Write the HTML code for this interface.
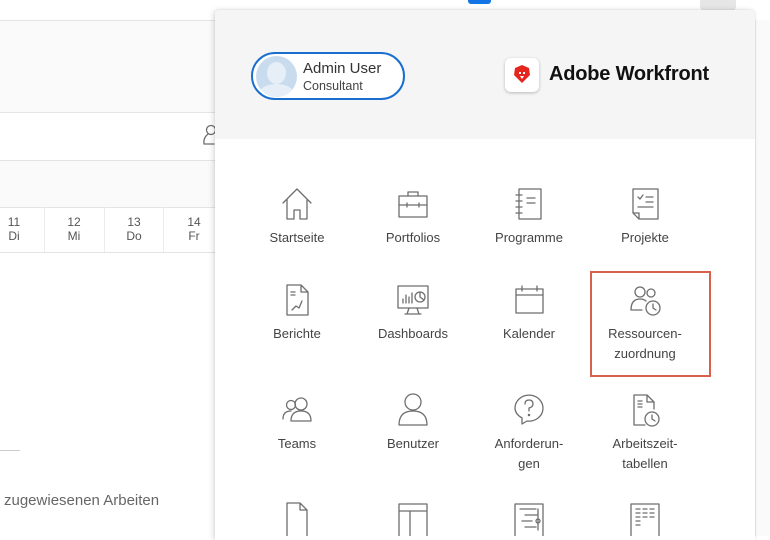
<!DOCTYPE html>
<html><head><meta charset="utf-8"><style>
*{margin:0;padding:0;box-sizing:border-box}
body{width:770px;height:536px;overflow:hidden;background:#fff;font-family:"Liberation Sans",sans-serif;position:relative;color:#4b4b4b}
.a{position:absolute}
.hl{position:absolute;left:0;height:1px;background:#e4e4e4}
.vl{position:absolute;width:1px;background:#ececec;top:207px;height:45px}
.d{position:absolute;top:215px;width:40px;text-align:center;font-size:12px;line-height:14px;color:#555}
.it{position:absolute;width:116px;text-align:center;font-size:13px;line-height:20px;color:#444}
.it svg{display:block;margin:0 auto 6px}
svg{fill:none;stroke:#6e6e6e;stroke-width:1.3;stroke-linecap:round;stroke-linejoin:round}
</style></head><body>
<div class="a" style="left:0;top:20px;width:770px;height:92px;background:#fafafa"></div>
<div class="hl" style="top:20px;width:770px"></div>
<div class="hl" style="top:112px;width:215px"></div>
<div class="a" style="left:0;top:160px;width:215px;height:47px;background:#fafafa"></div>
<div class="hl" style="top:160px;width:215px"></div>
<div class="hl" style="top:207px;width:215px"></div>
<div class="hl" style="top:252px;width:215px"></div>
<div class="vl" style="left:44px"></div><div class="vl" style="left:104px"></div><div class="vl" style="left:163px"></div>
<div class="d" style="left:-6px">11<br>Di</div>
<div class="d" style="left:54px">12<br>Mi</div>
<div class="d" style="left:114px">13<br>Do</div>
<div class="d" style="left:174px">14<br>Fr</div>
<svg class="a" style="left:202px;top:124px" width="14" height="22" viewBox="0 0 14 22"><circle cx="9" cy="6" r="4.5"/><path d="M6 10 Q1 14 2 20 L12 20"/></svg>
<div class="hl" style="top:450px;width:20px;background:#ccc"></div>
<div class="a" style="left:4px;top:492px;font-size:15px;color:#666">zugewiesenen Arbeiten</div>
<div class="a" style="left:468px;top:0;width:23px;height:4px;background:#1473e6;border-radius:0 0 3px 3px"></div>
<div class="a" style="left:700px;top:0;width:36px;height:12px;background:#e6e6e6;border-radius:0 0 6px 6px"></div>
<div class="a" style="left:755px;top:20px;width:15px;height:516px;background:#fafafa;border-left:1px solid #eee"></div>
<!-- panel -->
<div class="a" style="left:215px;top:10px;width:540px;height:530px;background:#fff;box-shadow:-2px 0 6px rgba(0,0,0,.12),0 0 2px rgba(0,0,0,.1);border-radius:4px 4px 0 0"></div>
<div class="a" style="left:215px;top:10px;width:540px;height:129px;background:#f5f5f5;border-radius:4px 4px 0 0"></div>
<div class="a" style="left:251px;top:52px;width:154px;height:48px;border:2.5px solid #1a6fce;border-radius:24px;background:#fff"></div>
<div class="a" style="left:256px;top:56px;width:41px;height:41px;border-radius:50%;background:#c9dced;overflow:hidden"><div class="a" style="left:11px;top:6px;width:19px;height:22px;border-radius:50%;background:#e6eff7"></div><div class="a" style="left:3px;top:28px;width:35px;height:20px;border-radius:50% 50% 0 0;background:#e6eff7"></div></div>
<div class="a" style="left:303px;top:60px;font-size:15px;color:#333">Admin User</div>
<div class="a" style="left:303px;top:79px;font-size:12.5px;color:#444">Consultant</div>
<div class="a" style="left:505px;top:58px;width:34px;height:34px;background:#fff;border-radius:6px;box-shadow:0 1px 3px rgba(0,0,0,.25)"></div>
<svg class="a" style="left:512px;top:64px;stroke:none" width="20" height="20" viewBox="0 0 20 20"><path fill="#e4261f" d="M10 1 L17 4 L18 11 L10 19 L2 11 L3 4Z"/><path fill="#fff" d="M7 8h2v2H7zM11 8h2v2h-2zM8 12h4l-2 3z"/></svg>
<div class="a" style="left:549px;top:63px;font-size:20px;font-weight:bold;color:#111;letter-spacing:-0.2px">Adobe Workfront</div>
<!-- grid -->
<div class="a" style="left:590px;top:271px;width:121px;height:106px;border:2px solid #d9604a"></div>
<div class="it" style="left:239px;top:186px"><svg width="34" height="36" viewBox="0 0 34 36"><path d="M3 17 L17 3 L31 17 M7 13 V33 H14 V24 H20 V33 H27 V13"/></svg>Startseite</div>
<div class="it" style="left:355px;top:186px"><svg width="34" height="36" viewBox="0 0 34 36"><rect x="3" y="10" width="28" height="21"/><path d="M12 10 V6 H22 V10 M3 19 H31 M11 17 V21 M23 17 V21"/></svg>Portfolios</div>
<div class="it" style="left:471px;top:186px"><svg width="34" height="36" viewBox="0 0 34 36"><rect x="7" y="3" width="22" height="30"/><path d="M4 9 H10 M4 15 H10 M4 21 H10 M4 27 H10 M15 12 H23 M15 17 H23"/></svg>Programme</div>
<div class="it" style="left:587px;top:186px"><svg width="34" height="36" viewBox="0 0 34 36"><path d="M5 3 H30 V33 H11 L5 27Z M5 27 H11 V33 M10 11 L12 13 L15 9 M18 11 H25 M18 16 H25 M10 21 H25"/></svg>Projekte</div>
<div class="it" style="left:239px;top:282px"><svg width="34" height="36" viewBox="0 0 34 36"><path d="M7 3 H21 L28 10 V33 H7Z M21 3 V10 H28 M11 10 H15 M11 13 H15 M12 28 L16 24 L19 26 L22 19"/></svg>Berichte</div>
<div class="it" style="left:355px;top:282px"><svg width="34" height="36" viewBox="0 0 34 36"><rect x="2" y="4" width="30" height="22"/><path d="M13 26 L11 32 M21 26 L23 32 M9 32 H25 M7 21 V17 M10 21 V13 M13 21 V15 M16 21 V11"/><circle cx="24" cy="15" r="5"/><path d="M24 10 V15 L28 18"/></svg>Dashboards</div>
<div class="it" style="left:471px;top:282px"><svg width="34" height="36" viewBox="0 0 34 36"><rect x="4" y="7" width="27" height="24"/><path d="M4 13 H31 M10 4 V9 M25 4 V9"/></svg>Kalender</div>
<div class="it" style="left:587px;top:282px"><svg width="34" height="36" viewBox="0 0 34 36"><circle cx="12" cy="10" r="5"/><path d="M3 28 Q3 17 12 17 Q16 17 18 19 M3 28 H14"/><circle cx="23" cy="11" r="4"/><circle cx="25" cy="26" r="7"/><path d="M25 22 V26 L28 28"/></svg><span style="line-height:20px">Ressourcen-<br>zuordnung</span></div>
<div class="it" style="left:239px;top:392px"><svg width="34" height="36" viewBox="0 0 34 36"><circle cx="11" cy="13" r="4.5"/><circle cx="21" cy="12" r="6"/><path d="M3 27 Q3 19 11 19 M11 29 Q11 19 21 19 Q31 19 31 29Z"/></svg>Teams</div>
<div class="it" style="left:355px;top:392px"><svg width="34" height="36" viewBox="0 0 34 36"><circle cx="17" cy="10" r="8"/><path d="M3 33 Q3 19 17 19 Q31 19 31 33Z"/></svg>Benutzer</div>
<div class="it" style="left:471px;top:392px"><svg width="34" height="36" viewBox="0 0 34 36"><path d="M10 32 V26 Q3 22 3 16 A14 13 0 1 1 15 29Z"/><path d="M13 12 Q13 8 17 8 Q21 8 21 12 Q21 15 17 16 V19"/><circle cx="17" cy="23" r="0.6"/></svg>Anforderun-<br>gen</div>
<div class="it" style="left:587px;top:392px"><svg width="34" height="36" viewBox="0 0 34 36"><path d="M6 3 H19 L26 10 V17 M19 3 V10 H26 M17 33 H6 V3 M10 9 H14 M10 12 H14 M10 15 H14"/><circle cx="24" cy="27" r="7"/><path d="M24 23 V27 L27 29"/></svg>Arbeitszeit-<br>tabellen</div>
<svg class="a" style="left:280px;top:500px" width="34" height="36" viewBox="0 0 34 36"><path d="M7 3 H20 L27 10 V36 M7 3 V36 M20 3 V10 H27"/></svg>
<svg class="a" style="left:396px;top:500px" width="34" height="36" viewBox="0 0 34 36"><path d="M3 36 V4 H31 V36 M3 11 H31 M14 11 V36"/></svg>
<svg class="a" style="left:512px;top:500px" width="34" height="36" viewBox="0 0 34 36"><path d="M3 36 V4 H31 V36 M8 9 H24 M13 15 H26 M10 21 H20 M13 27 H24 M26 9 V30"/><circle cx="26" cy="21" r="2"/></svg>
<svg class="a" style="left:628px;top:500px" width="34" height="36" viewBox="0 0 34 36"><path d="M3 36 V4 H31 V36 M8 9 H12 M15 9 H19 M22 9 H26 M8 13 H12 M15 13 H19 M22 13 H26 M8 17 H12 M15 17 H19 M22 17 H26 M8 21 H12 M8 25 H12"/></svg>
</body></html>
